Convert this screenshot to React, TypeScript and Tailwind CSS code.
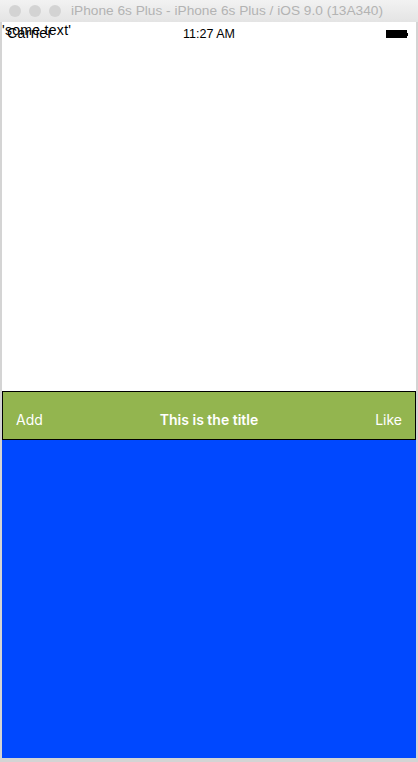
import React from 'react';

function StatusBar() {
  return (
    <div className="relative h-[20px] w-full font-['Liberation_Sans',sans-serif] text-black">
      <span className="absolute left-[5px] top-[4px] text-[14px] leading-none tracking-[0.4px]">Carrier</span>
      <span className="absolute left-0 top-[1px] text-[14px] leading-none tracking-[0.3px]">'some text'</span>
      <span className="absolute left-0 right-0 top-[6px] text-center text-[12.5px] font-medium leading-none">11:27 AM</span>
      <div className="absolute right-[8px] top-[8px] flex items-center">
        <div className="h-[8px] w-[21px] bg-black" />
        <div className="h-[3px] w-[1px] bg-black" />
      </div>
    </div>
  );
}

function NavBar() {
  return (
    <div className="flex h-[49px] items-end border border-black bg-[#93b54f] px-[13px] pb-[12px] font-['Inter',sans-serif] text-[14px] text-white">
      <span className="w-[60px] leading-none">Add</span>
      <span className="flex-1 text-center font-semibold leading-none">This is the title</span>
      <span className="w-[60px] text-right leading-none">Like</span>
    </div>
  );
}

export default function App() {
  return (
    <div className="flex h-[762px] w-[418px] flex-col bg-[#d4d4d4]">
      <div className="relative flex h-[22px] shrink-0 items-center bg-gradient-to-b from-[#f2f2f2] to-[#e4e4e4] px-[9px]">
        <div className="flex gap-[8px]">
          <div className="h-[12px] w-[12px] rounded-full bg-[#d3d3d3]" />
          <div className="h-[12px] w-[12px] rounded-full bg-[#d3d3d3]" />
          <div className="h-[12px] w-[12px] rounded-full bg-[#d3d3d3]" />
        </div>
        <span className="absolute left-[71px] top-[4px] font-['Liberation_Sans',sans-serif] text-[13.7px] leading-none text-[#b3b3b3]">
          iPhone 6s Plus - iPhone 6s Plus / iOS 9.0 (13A340)
        </span>
      </div>
      <div className="flex h-[736px] flex-col px-[2px]">
        <div className="flex h-[369px] flex-col bg-white">
          <StatusBar />
        </div>
        <NavBar />
        <div className="flex-1 bg-[#0048ff]" />
      </div>
    </div>
  );
}
